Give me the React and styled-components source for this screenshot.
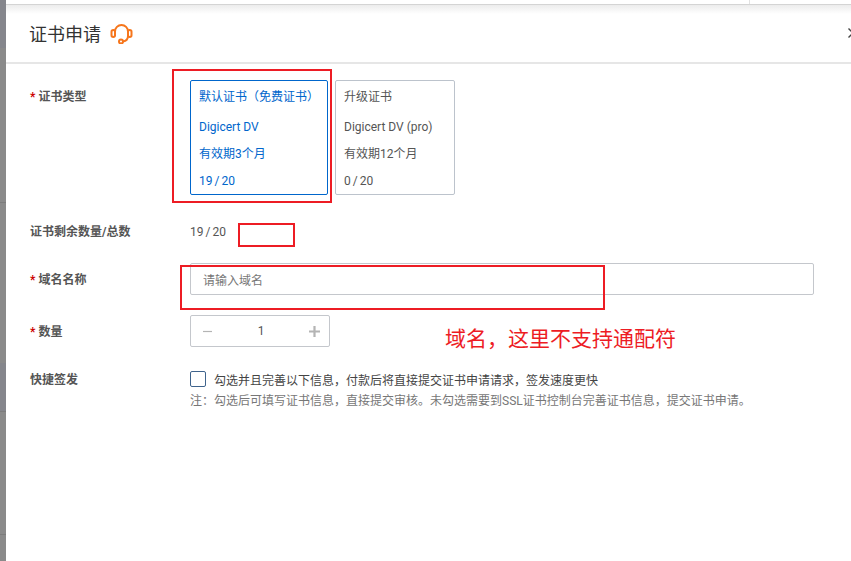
import React from "react";
import styled, { createGlobalStyle } from "styled-components";

const GlobalStyle = createGlobalStyle`
  html, body {
    margin: 0;
    height: 100%;
    overflow: hidden;
    background: #fff;
  }
  body {
    font-family: Roboto, "Noto Sans CJK SC", sans-serif;
    font-size: 12px;
    color: #555;
  }
`;

const Page = styled.div`
  position: relative;
  width: 851px;
  height: 561px;
  overflow: hidden;
  display: flex;
  flex-direction: column;
`;

const TopStrip = styled.div`
  height: 4px;
  flex: none;
  display: flex;
  justify-content: flex-end;
  padding-right: 101px;
  background: #fff;
  border-bottom: 1px solid #d4d4d4;
  div {
    width: 1px;
    background: #e2e2e2;
  }
`;

const Body = styled.div`
  flex: 1;
  display: flex;
  min-height: 0;
`;

const Backdrop = styled.div`
  flex: none;
  width: 6px;
  display: flex;
  flex-direction: column;
  background: #8a8a8a;
  margin-top: -5px;
`;

const BackdropCell = styled.div`
  box-sizing: border-box;
  height: ${(p) => p.$h}px;
  flex: none;
  background: ${(p) => p.$bg || "#8a8a8a"};
  border-bottom: ${(p) => (p.$line ? "1px solid #7c7c7c" : "none")};
`;

const Drawer = styled.div`
  flex: none;
  width: 880px;
  display: flex;
  flex-direction: column;
  background: linear-gradient(#ececec, #fff 9px);
`;

const Header = styled.div`
  height: 57px;
  flex: none;
  display: flex;
  align-items: center;
  padding: 0 28px 0 23px;
  border-bottom: 2px solid #e6e6e6;
`;

const Title = styled.h1`
  margin: 0;
  padding-top: 2px;
  font-size: 18px;
  font-weight: 400;
  color: #333;
  line-height: 24px;
`;

const Headset = styled.svg`
  width: 23px;
  height: 21px;
  margin-left: 9px;
  fill: none;
  stroke: #f6761c;
  stroke-width: 2;
`;

const Close = styled.svg`
  width: 10px;
  height: 10px;
  margin-left: auto;
  margin-top: -2px;
  stroke: #444;
  stroke-width: 1.4;
`;

const Form = styled.div`
  padding: 16px 0 0 24px;
  display: flex;
  flex-direction: column;
`;

const Row = styled.div`
  display: flex;
  margin-bottom: ${(p) => p.$gap}px;
`;

const Label = styled.div`
  flex: none;
  width: 160px;
  font-weight: 700;
  color: #555;
  line-height: ${(p) => p.$lh || 34}px;
  em {
    font-style: normal;
    color: #c00;
    margin-right: 3px;
  }
`;

const Cards = styled.div`
  display: flex;
  gap: 7px;
`;

const Card = styled.div`
  box-sizing: border-box;
  width: ${(p) => p.$w}px;
  height: 115px;
  padding: 3px 8px 0;
  border: 1px solid ${(p) => (p.$active ? "#0066cc" : "#bcc3cc")};
  border-radius: 2px;
  color: ${(p) => (p.$active ? "#0066cc" : "#555")};
  line-height: 26.8px;
  white-space: nowrap;
`;

const CardTitle = styled.div`
  margin-bottom: 3.4px;
`;

const Count = styled.div`
  word-spacing: -1px;
`;

const Plain = styled(Count)`
  line-height: 24px;
  color: #555;
`;

const Input = styled.input`
  box-sizing: border-box;
  width: 624px;
  height: 32px;
  padding: 4px 12px 0;
  border: 1px solid #c4c7cc;
  border-radius: 2px;
  font: inherit;
  outline: none;
  &::placeholder {
    color: #777;
    opacity: 1;
  }
`;

const Stepper = styled.div`
  box-sizing: border-box;
  width: 140px;
  height: 32px;
  display: flex;
  align-items: center;
  justify-content: space-between;
  padding: 0 9px 0 11px;
  border: 1px solid #c4c7cc;
  border-radius: 2px;
  font-size: 12px;
  color: #555;
`;

const StepIcon = styled.svg`
  width: 11px;
  height: 11px;
  stroke: #b4b4b4;
  stroke-width: ${(p) => p.$sw};
`;

const Check = styled.div`
  box-sizing: border-box;
  width: 16px;
  height: 16px;
  flex: none;
  border: 1px solid #3f638c;
  border-radius: 2px;
  margin-right: 8px;
`;

const CheckLine = styled.div`
  display: flex;
  align-items: center;
  height: 16px;
  color: #444;
  white-space: nowrap;
`;

const Note = styled.div`
  margin-top: 5px;
  line-height: 18px;
  color: #777;
  white-space: nowrap;
`;

/* red annotations drawn on top of the screenshot */
const Mark = styled.div`
  position: absolute;
  box-sizing: border-box;
  left: ${(p) => p.$x}px;
  top: ${(p) => p.$y}px;
  width: ${(p) => p.$w}px;
  height: ${(p) => p.$h}px;
  border: 2px solid #ed1c24;
`;

const MarkText = styled.div`
  position: absolute;
  left: 445px;
  top: 324px;
  font-size: 21px;
  line-height: 30px;
  color: #ed1c24;
  white-space: nowrap;
`;

export default function App() {
  return (
    <Page>
      <GlobalStyle />
      <TopStrip>
        <div />
      </TopStrip>
      <Body>
        <Backdrop>
          <BackdropCell $h={48} $bg="#85868c" />
          <BackdropCell $h={155} $line />
          <BackdropCell $h={160} />
          <BackdropCell $h={49} $bg="#85868c" $line />
          <BackdropCell $h={123} $line />
        </Backdrop>
        <Drawer>
          <Header>
            <Title>证书申请</Title>
            <Headset viewBox="0 0 23 21">
              <path d="M5 13V8.5a6.5 6.5 0 0 1 13 0V13" />
              <rect x="1.5" y="7" width="3.5" height="7" rx="1.7" />
              <rect x="18" y="7" width="3.5" height="7" rx="1.7" />
              <path d="M18 13c0 3-2 5-5 5.5" />
              <circle cx="11" cy="18.5" r="2" />
            </Headset>
            <Close viewBox="0 0 10 10">
              <path d="M0.5 0.5l9 9M9.5 0.5l-9 9" />
            </Close>
          </Header>
          <Form>
            <Row $gap={25}>
              <Label $lh={35}>
                <em>*</em>证书类型
              </Label>
              <Cards>
                <Card $w={138} $active>
                  <CardTitle>默认证书（免费证书）</CardTitle>
                  <div>Digicert DV</div>
                  <div>有效期3个月</div>
                  <Count>19 / 20</Count>
                </Card>
                <Card $w={120}>
                  <CardTitle>升级证书</CardTitle>
                  <div>Digicert DV (pro)</div>
                  <div>有效期12个月</div>
                  <Count>0 / 20</Count>
                </Card>
              </Cards>
            </Row>
            <Row $gap={19}>
              <Label $lh={24}>证书剩余数量/总数</Label>
              <Plain>19 / 20</Plain>
            </Row>
            <Row $gap={18}>
              <Label>
                <em>*</em>域名名称
              </Label>
              <Input placeholder="请输入域名" />
            </Row>
            <Row $gap={22}>
              <Label>
                <em>*</em>数量
              </Label>
              <Stepper>
                <StepIcon viewBox="0 0 11 11" $sw={1.2}>
                  <path d="M1 5.5h9" />
                </StepIcon>
                <span>1</span>
                <StepIcon viewBox="0 0 11 11" $sw={2.2}>
                  <path d="M0 5.5h11M5.5 0v11" />
                </StepIcon>
              </Stepper>
            </Row>
            <Row $gap={0}>
              <Label $lh={18}>快捷签发</Label>
              <div>
                <CheckLine>
                  <Check />
                  勾选并且完善以下信息，付款后将直接提交证书申请请求，签发速度更快
                </CheckLine>
                <Note>
                  注：勾选后可填写证书信息，直接提交审核。未勾选需要到SSL证书控制台完善证书信息，提交证书申请。
                </Note>
              </div>
            </Row>
          </Form>
        </Drawer>
      </Body>
      <Mark $x={172} $y={69} $w={160} $h={134} />
      <Mark $x={238} $y={223} $w={57} $h={24} />
      <Mark $x={180} $y={265} $w={425} $h={45} />
      <MarkText>域名，这里不支持通配符</MarkText>
    </Page>
  );
}
